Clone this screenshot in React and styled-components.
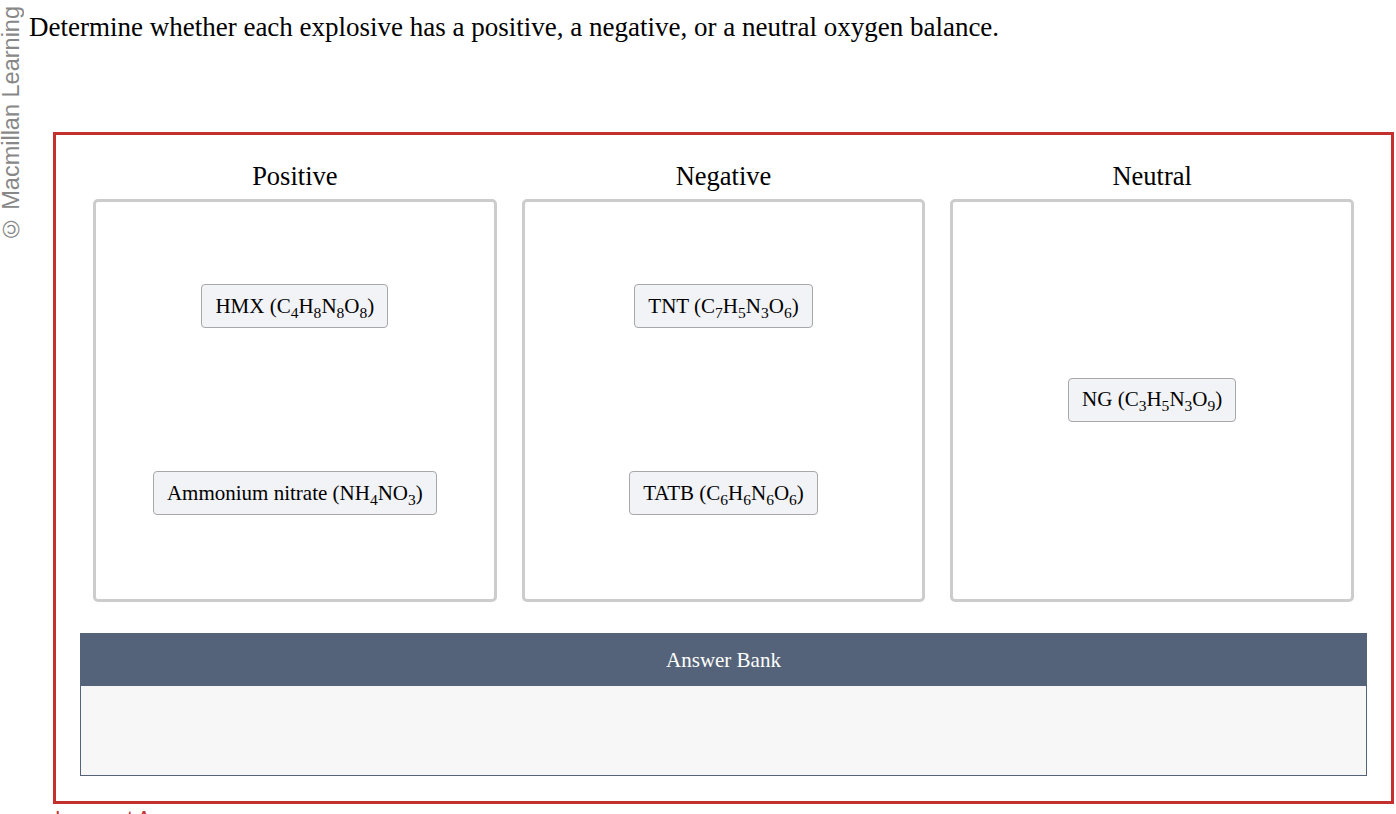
import styled, { createGlobalStyle } from 'styled-components';

const GlobalStyle = createGlobalStyle`
  html, body {
    margin: 0;
    padding: 0;
    overflow: hidden;
    background: #fff;
  }
  body {
    font-family: "Liberation Serif", "Times New Roman", serif;
    color: #000;
  }
`;

const columns = [
  {
    title: 'Positive',
    items: [
      { name: 'HMX', formula: [['C', 4], ['H', 8], ['N', 8], ['O', 8]] },
      { name: 'Ammonium nitrate', formula: [['NH', 4], ['NO', 3]] },
    ],
  },
  {
    title: 'Negative',
    items: [
      { name: 'TNT', formula: [['C', 7], ['H', 5], ['N', 3], ['O', 6]] },
      { name: 'TATB', formula: [['C', 6], ['H', 6], ['N', 6], ['O', 6]] },
    ],
  },
  {
    title: 'Neutral',
    items: [{ name: 'NG', formula: [['C', 3], ['H', 5], ['N', 3], ['O', 9]] }],
  },
];

const Formula = ({ parts }) => (
  <>
    (
    {parts.map(([el, n], i) => (
      <span key={i}>
        {el}
        <Sub>{n}</Sub>
      </span>
    ))}
    )
  </>
);

const App = () => {
  return (
    <Page>
      <GlobalStyle />
      <Watermark>© Macmillan Learning</Watermark>
      <Prompt>Determine whether each explosive has a positive, a negative, or a neutral oxygen balance.</Prompt>
      <QuestionBox>
        <Columns>
          {columns.map(col => (
            <Column key={col.title}>
              <ColumnTitle>{col.title}</ColumnTitle>
              <DropZone $gap={col.items.length > 1 ? 145 : 0}>
                {col.items.map(item => (
                  <Chip key={item.name}>
                    {item.name} <Formula parts={item.formula} />
                  </Chip>
                ))}
              </DropZone>
            </Column>
          ))}
        </Columns>
        <AnswerBank>
          <BankHeader>Answer Bank</BankHeader>
          <BankBody />
        </AnswerBank>
      </QuestionBox>
      <Status>Incorrect Answer</Status>
    </Page>
  );
};

const Page = styled.div`
  position: relative;
  width: 1396px;
  height: 814px;
  padding-top: 11px;
  box-sizing: border-box;
`;

const Watermark = styled.div`
  position: absolute;
  left: 0;
  top: 4px;
  padding: 2px 0;
  writing-mode: vertical-rl;
  transform: rotate(180deg);
  font-family: "Liberation Sans", Arial, sans-serif;
  font-size: 23.5px;
  line-height: 22px;
  color: #888;
  white-space: nowrap;
`;

const Prompt = styled.div`
  margin-left: 29px;
  font-size: 27px;
  line-height: 33px;
`;

const QuestionBox = styled.div`
  margin: 88px 0 0 53px;
  width: 1341px;
  box-sizing: border-box;
  border: 3px solid #c3302d;
  padding: 26px 24px 25px;
`;

const Columns = styled.div`
  display: grid;
  grid-template-columns: repeat(3, 1fr);
  gap: 25px;
  padding: 0 13px;
`;

const Column = styled.div`
  display: flex;
  flex-direction: column;
`;

const ColumnTitle = styled.div`
  text-align: center;
  font-size: 26.5px;
  line-height: 30px;
  margin-bottom: 8px;
`;

const DropZone = styled.div`
  height: 403px;
  box-sizing: border-box;
  border: 3px solid #cccccc;
  border-radius: 5px;
  display: flex;
  flex-direction: column;
  align-items: center;
  justify-content: center;
  gap: ${p => p.$gap}px;
`;

const Chip = styled.div`
  height: 44px;
  box-sizing: border-box;
  display: flex;
  align-items: center;
  padding: 0 13px;
  margin-top: -2px;
  background: #f2f3f7;
  border: 1px solid #a8a8a8;
  border-radius: 4px;
  font-size: 21px;
  white-space: pre;
`;

const Sub = styled.sub`
  font-size: 0.74em;
  vertical-align: -0.32em;
  line-height: 0;
`;

const AnswerBank = styled.div`
  margin-top: 31px;
  border: 1px solid #546379;
`;

const BankHeader = styled.div`
  height: 52px;
  background: #546379;
  color: #fff;
  font-size: 21px;
  display: flex;
  align-items: center;
  justify-content: center;
`;

const BankBody = styled.div`
  height: 89px;
  background: #f7f7f7;
`;

const Status = styled.div`
  margin: 2px 0 0 55px;
  color: #c3302d;
  font-family: "Liberation Sans", Arial, sans-serif;
  font-size: 20px;
  line-height: 24px;
`;

export default App;
